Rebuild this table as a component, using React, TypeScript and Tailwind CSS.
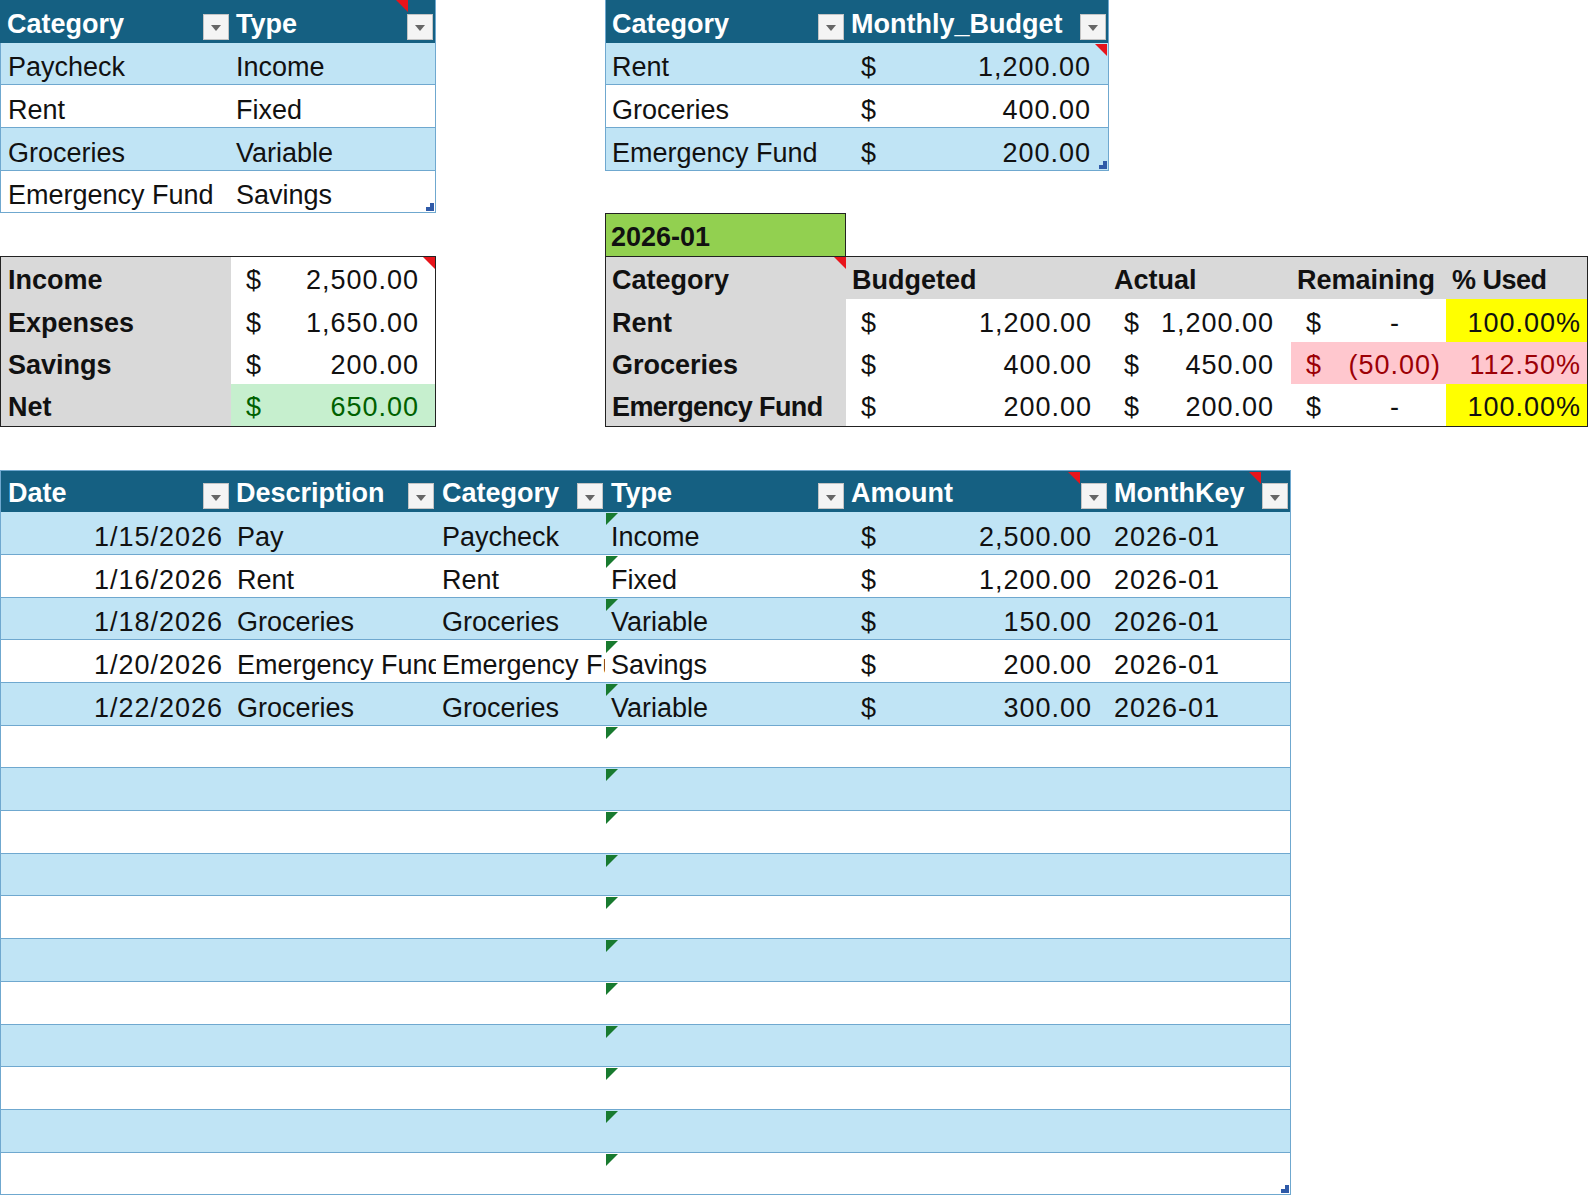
import React from 'react';

const W = ['w-[231px]', 'w-[205px]', 'w-[169px]', 'w-[241px]', 'w-[263px]', 'w-[182px]', 'w-[155px]', 'w-[142px]'];

const HDR = 'bg-[#156082] text-white font-bold justify-between pr-[2px] pb-[3px]';
const BLUE = 'bg-[#C0E4F5] border-b border-[#6FA8CF] pb-[1px]';
const WHITE = 'bg-white border-b border-[#6FA8CF] pb-[1px]';
const GRAY = 'bg-[#D9D9D9] font-bold';

function Row({ children }: { children?: React.ReactNode }) {
  return <div className="flex h-[42.7px]">{children}</div>;
}

function Cell({ c, className = '', children }: { c: number; className?: string; children?: React.ReactNode }) {
  const pad = className.includes('pb-') ? '' : 'pb-[3px]';
  return (
    <div className={`relative shrink-0 h-full flex items-end overflow-hidden whitespace-nowrap ${pad} ${W[c]} ${className}`}>
      {children}
    </div>
  );
}

function Dd() {
  return (
    <div className="w-[26px] h-[26px] shrink-0 bg-[#f4f4f4] border border-[#c4c4c4] flex items-center justify-center">
      <svg width="10" height="6" className="mt-[3px]">
        <polygon points="0,0 10,0 5,6" fill="#666" />
      </svg>
    </div>
  );
}

function RedTri({ className = 'right-0 top-0' }: { className?: string }) {
  return (
    <svg width="12" height="12" className={`absolute ${className}`}>
      <polygon points="0,0 12,0 12,12" fill="#e8141b" />
    </svg>
  );
}

function GreenTri() {
  return (
    <svg width="12" height="12" className="absolute left-[1px] top-[1px]">
      <polygon points="0,0 12,0 0,12" fill="#187a2f" />
    </svg>
  );
}

function Handle() {
  return (
    <svg width="8" height="8" className="absolute right-[1px] bottom-[1px]">
      <polygon points="8,0 8,8 0,8 0,4 4,4 4,0" fill="#2f5aa8" />
    </svg>
  );
}

function Txt({ children, pl = 'pl-[7px]' }: { children?: React.ReactNode; pl?: string }) {
  return <span className={pl}>{children}</span>;
}

function Acct({ v, pr = 'pr-[17px]' }: { v: string; pr?: string }) {
  return (
    <div className="flex w-full justify-between">
      <span className="pl-[15px]">$</span>
      <span className={`${pr} tracking-[1px]`}>{v}</span>
    </div>
  );
}

function Right({ v, pr = 'pr-[7px]' }: { v: string; pr?: string }) {
  return <span className={`ml-auto tracking-[1px] ${pr}`}>{v}</span>;
}

const transactions = [
  ['1/15/2026', 'Pay', 'Paycheck', 'Income', '2,500.00'],
  ['1/16/2026', 'Rent', 'Rent', 'Fixed', '1,200.00'],
  ['1/18/2026', 'Groceries', 'Groceries', 'Variable', '150.00'],
  ['1/20/2026', 'Emergency Fund', 'Emergency Fund', 'Savings', '200.00'],
  ['1/22/2026', 'Groceries', 'Groceries', 'Variable', '300.00'],
];

export default function App() {
  const blanks = Array.from({ length: 11 }, (_, i) => i);

  return (
    <div className="w-[1588px] h-[1196px] overflow-hidden bg-white text-[#111] font-['Liberation_Sans',Arial,sans-serif] text-[27px] leading-[31px]">
      {/* lookup tables */}
      <Row>
        <Cell c={0} className={HDR}>
          <Txt>Category</Txt>
          <Dd />
        </Cell>
        <Cell c={1} className={`${HDR} border-r border-[#6FA8CF]`}>
          <Txt pl="pl-[5px]">Type</Txt>
          <Dd />
          <RedTri className="right-[27px] top-0" />
        </Cell>
        <Cell c={2} />
        <Cell c={3} className={`${HDR} border-l border-[#6FA8CF]`}>
          <Txt pl="pl-[6px]">Category</Txt>
          <Dd />
        </Cell>
        <Cell c={4} className={`${HDR} border-r border-[#6FA8CF]`}>
          <Txt pl="pl-[5px]">Monthly_Budget</Txt>
          <Dd />
        </Cell>
      </Row>

      <Row>
        <Cell c={0} className={`${BLUE} border-l`}><Txt>Paycheck</Txt></Cell>
        <Cell c={1} className={`${BLUE} border-r`}><Txt pl="pl-[5px]">Income</Txt></Cell>
        <Cell c={2} />
        <Cell c={3} className={`${BLUE} border-l`}><Txt pl="pl-[6px]">Rent</Txt></Cell>
        <Cell c={4} className={`${BLUE} border-r`}><Acct v="1,200.00" /><RedTri className="right-[1px] top-[1px]" /></Cell>
      </Row>
      <Row>
        <Cell c={0} className={`${WHITE} border-l`}><Txt>Rent</Txt></Cell>
        <Cell c={1} className={`${WHITE} border-r`}><Txt pl="pl-[5px]">Fixed</Txt></Cell>
        <Cell c={2} />
        <Cell c={3} className={`${WHITE} border-l`}><Txt pl="pl-[6px]">Groceries</Txt></Cell>
        <Cell c={4} className={`${WHITE} border-r`}><Acct v="400.00" /></Cell>
      </Row>
      <Row>
        <Cell c={0} className={`${BLUE} border-l`}><Txt>Groceries</Txt></Cell>
        <Cell c={1} className={`${BLUE} border-r`}><Txt pl="pl-[5px]">Variable</Txt></Cell>
        <Cell c={2} />
        <Cell c={3} className={`${BLUE} border-l`}><Txt pl="pl-[6px]">Emergency Fund</Txt></Cell>
        <Cell c={4} className={`${BLUE} border-r`}><Acct v="200.00" /><Handle /></Cell>
      </Row>
      <Row>
        <Cell c={0} className={`${WHITE} border-l`}><Txt>Emergency Fund</Txt></Cell>
        <Cell c={1} className={`${WHITE} border-r`}><Txt pl="pl-[5px]">Savings</Txt><Handle /></Cell>
      </Row>

      {/* month selector */}
      <Row>
        <Cell c={0} />
        <Cell c={1} />
        <Cell c={2} />
        <Cell c={3} className="bg-[#92D050] border border-b-0 border-[#222] font-bold"><Txt pl="pl-[5px]">2026-01</Txt></Cell>
      </Row>

      {/* summaries */}
      <Row>
        <Cell c={0} className={`${GRAY} border-t border-l border-[#222]`}><Txt>Income</Txt></Cell>
        <Cell c={1} className="bg-white border-t border-r border-[#222]"><Acct v="2,500.00" pr="pr-[16px]" /><RedTri className="right-0 top-0" /></Cell>
        <Cell c={2} />
        <Cell c={3} className={`${GRAY} border-t border-l border-[#222]`}><Txt pl="pl-[6px]">Category</Txt><RedTri className="right-0 top-0" /></Cell>
        <Cell c={4} className={`${GRAY} border-t border-[#222]`}><Txt pl="pl-[6px]">Budgeted</Txt></Cell>
        <Cell c={5} className={`${GRAY} border-t border-[#222]`}><Txt pl="pl-[5px]">Actual</Txt></Cell>
        <Cell c={6} className={`${GRAY} border-t border-[#222]`}><Txt pl="pl-[6px]">Remaining</Txt></Cell>
        <Cell c={7} className={`${GRAY} border-t border-r border-[#222] tracking-[-0.5px]`}><Txt pl="pl-[6px]">% Used</Txt></Cell>
      </Row>
      <Row>
        <Cell c={0} className={`${GRAY} border-l border-[#222]`}><Txt>Expenses</Txt></Cell>
        <Cell c={1} className="bg-white border-r border-[#222]"><Acct v="1,650.00" pr="pr-[16px]" /></Cell>
        <Cell c={2} />
        <Cell c={3} className={`${GRAY} border-l border-[#222]`}><Txt pl="pl-[6px]">Rent</Txt></Cell>
        <Cell c={4}><Acct v="1,200.00" /></Cell>
        <Cell c={5}><Acct v="1,200.00" /></Cell>
        <Cell c={6}><Acct v="-" pr="pr-[46px]" /></Cell>
        <Cell c={7} className="bg-[#FFFF00] border-r border-[#222]"><Right v="100.00%" pr="pr-[6px]" /></Cell>
      </Row>
      <Row>
        <Cell c={0} className={`${GRAY} border-l border-[#222]`}><Txt>Savings</Txt></Cell>
        <Cell c={1} className="bg-white border-r border-[#222]"><Acct v="200.00" pr="pr-[16px]" /></Cell>
        <Cell c={2} />
        <Cell c={3} className={`${GRAY} border-l border-[#222]`}><Txt pl="pl-[6px]">Groceries</Txt></Cell>
        <Cell c={4}><Acct v="400.00" /></Cell>
        <Cell c={5}><Acct v="450.00" /></Cell>
        <Cell c={6} className="bg-[#FFC7CE] text-[#9C0006]"><Acct v="(50.00)" pr="pr-[5px]" /></Cell>
        <Cell c={7} className="bg-[#FFC7CE] text-[#9C0006] border-r border-[#222]"><Right v="112.50%" pr="pr-[6px]" /></Cell>
      </Row>
      <Row>
        <Cell c={0} className={`${GRAY} border-l border-b border-[#222]`}><Txt>Net</Txt></Cell>
        <Cell c={1} className="bg-[#C6EFCE] text-[#006100] border-r border-b border-[#222]"><Acct v="650.00" pr="pr-[16px]" /></Cell>
        <Cell c={2} />
        <Cell c={3} className={`${GRAY} border-l border-b border-[#222] tracking-[-0.6px]`}><Txt pl="pl-[6px]">Emergency Fund</Txt></Cell>
        <Cell c={4} className="border-b border-[#222]"><Acct v="200.00" /></Cell>
        <Cell c={5} className="border-b border-[#222]"><Acct v="200.00" /></Cell>
        <Cell c={6} className="border-b border-[#222]"><Acct v="-" pr="pr-[46px]" /></Cell>
        <Cell c={7} className="bg-[#FFFF00] border-r border-b border-[#222]"><Right v="100.00%" pr="pr-[6px]" /></Cell>
      </Row>

      <Row />

      {/* transactions */}
      <Row>
        <Cell c={0} className={`${HDR} border-t border-l border-[#6FA8CF]`}><Txt>Date</Txt><Dd /></Cell>
        <Cell c={1} className={`${HDR} border-t border-[#6FA8CF]`}><Txt pl="pl-[5px]">Description</Txt><Dd /></Cell>
        <Cell c={2} className={`${HDR} border-t border-[#6FA8CF]`}><Txt pl="pl-[6px]">Category</Txt><Dd /></Cell>
        <Cell c={3} className={`${HDR} border-t border-[#6FA8CF]`}><Txt pl="pl-[6px]">Type</Txt><Dd /></Cell>
        <Cell c={4} className={`${HDR} border-t border-[#6FA8CF]`}><Txt pl="pl-[5px]">Amount</Txt><Dd /><RedTri className="right-[29px] top-[1px]" /></Cell>
        <Cell c={5} className={`${HDR} border-t border-r border-[#6FA8CF]`}><Txt pl="pl-[5px]">MonthKey</Txt><Dd /><RedTri className="right-[29px] top-[1px]" /></Cell>
      </Row>

      {transactions.map((t, i) => {
        const bg = i % 2 === 0 ? BLUE : WHITE;
        return (
          <Row key={t[0]}>
            <Cell c={0} className={`${bg} border-l`}><Right v={t[0]} pr="pr-[8px]" /></Cell>
            <Cell c={1} className={bg}><Txt pl="pl-[6px]">{t[1]}</Txt></Cell>
            <Cell c={2} className={bg}><Txt pl="pl-[6px]">{t[2]}</Txt></Cell>
            <Cell c={3} className={bg}><Txt pl="pl-[6px]">{t[3]}</Txt><GreenTri /></Cell>
            <Cell c={4} className={bg}><Acct v={t[4]} /></Cell>
            <Cell c={5} className={`${bg} border-r`}><Txt pl="pl-[5px]"><span className="tracking-[1px]">2026-01</span></Txt></Cell>
          </Row>
        );
      })}

      {blanks.map((i) => {
        const bg = i % 2 === 0 ? WHITE : BLUE;
        const last = i === blanks.length - 1;
        return (
          <Row key={i}>
            <Cell c={0} className={`${bg} border-l`} />
            <Cell c={1} className={bg} />
            <Cell c={2} className={bg} />
            <Cell c={3} className={bg}><GreenTri /></Cell>
            <Cell c={4} className={bg} />
            <Cell c={5} className={`${bg} border-r`}>{last && <Handle />}</Cell>
          </Row>
        );
      })}
    </div>
  );
}
